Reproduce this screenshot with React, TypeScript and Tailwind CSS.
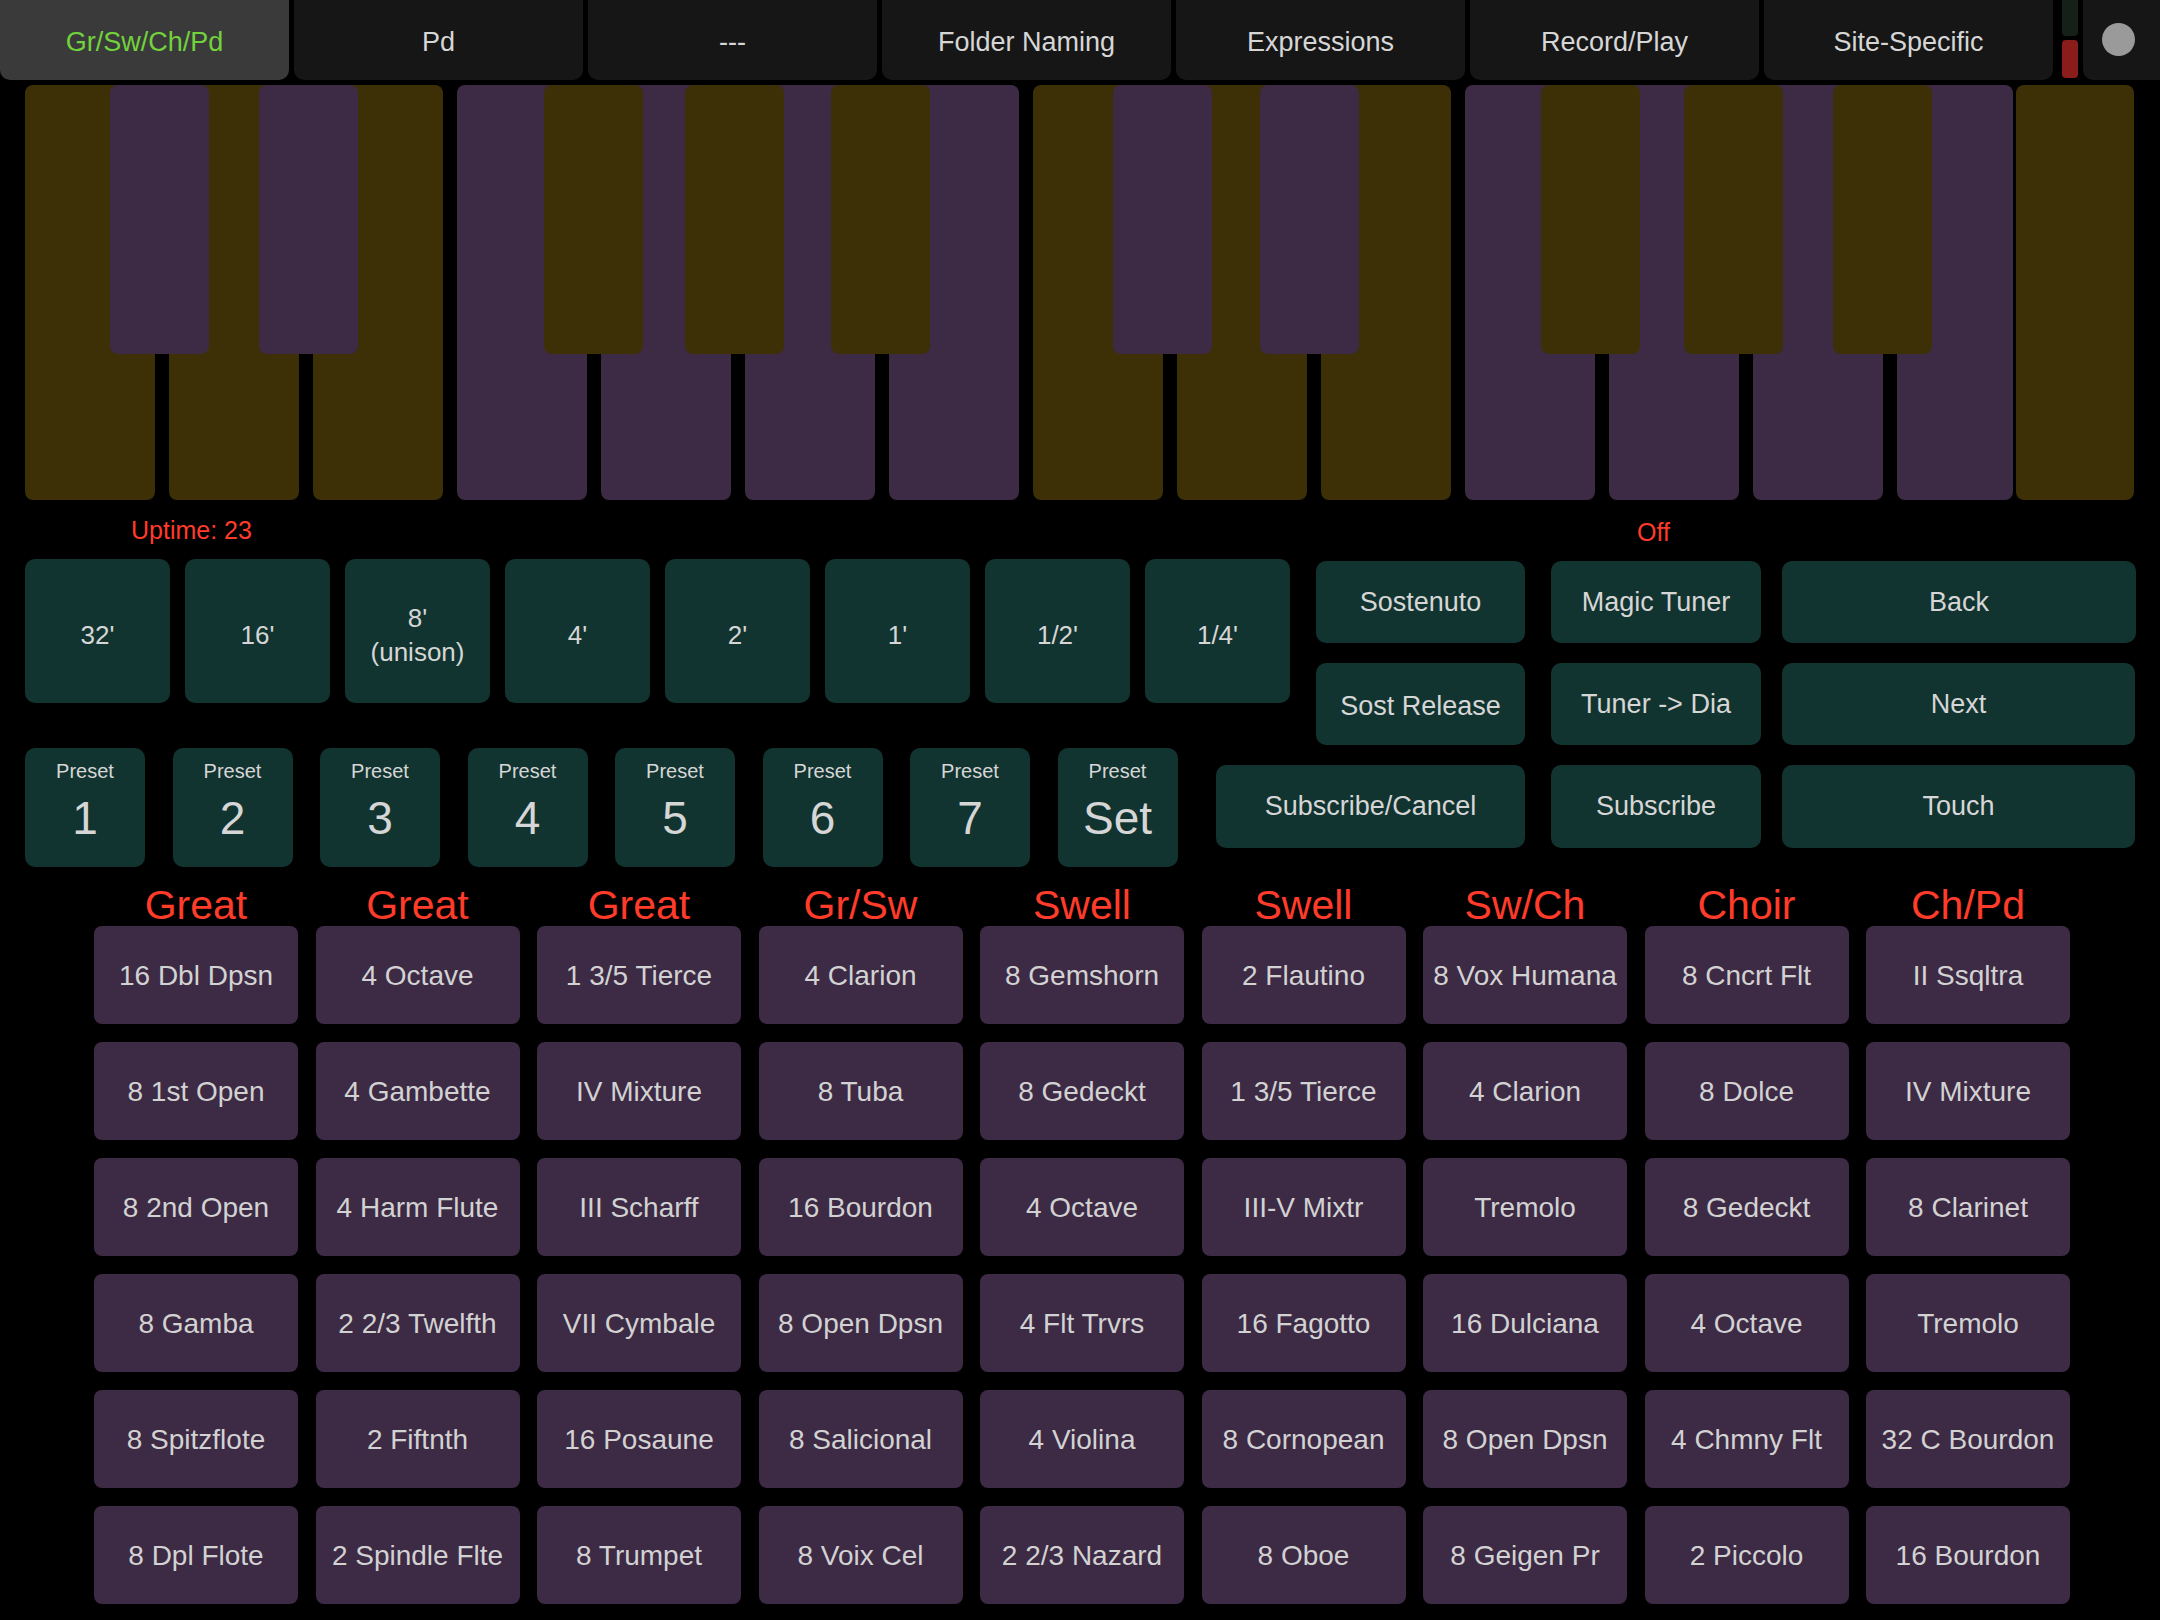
import React from "react";

const tabs = ["Gr/Sw/Ch/Pd", "Pd", "---", "Folder Naming", "Expressions", "Record/Play", "Site-Specific"];
const BROWN = "bg-[#3d2f06]";
const PURPLE = "bg-[#3d2a45]";
const whites = ["b", "b", "b", "p", "p", "p", "p", "b", "b", "b", "p", "p", "p", "p", "b"];
const blacks: [number, string][] = [
  [110, "p"], [259, "p"], [544, "b"], [685, "b"], [831, "b"], [1113, "p"], [1260, "p"], [1541, "b"], [1684, "b"], [1833, "b"],
];
const foot = ["32'", "16'", "8'\n(unison)", "4'", "2'", "1'", "1/2'", "1/4'"];
const presets = ["1", "2", "3", "4", "5", "6", "7", "Set"];
const heads = ["Great", "Great", "Great", "Gr/Sw", "Swell", "Swell", "Sw/Ch", "Choir", "Ch/Pd"];
const cols = [
  ["16 Dbl Dpsn", "8 1st Open", "8 2nd Open", "8 Gamba", "8 Spitzflote", "8 Dpl Flote"],
  ["4 Octave", "4 Gambette", "4 Harm Flute", "2 2/3 Twelfth", "2 Fiftnth", "2 Spindle Flte"],
  ["1 3/5 Tierce", "IV Mixture", "III Scharff", "VII Cymbale", "16 Posaune", "8 Trumpet"],
  ["4 Clarion", "8 Tuba", "16 Bourdon", "8 Open Dpsn", "8 Salicional", "8 Voix Cel"],
  ["8 Gemshorn", "8 Gedeckt", "4 Octave", "4 Flt Trvrs", "4 Violina", "2 2/3 Nazard"],
  ["2 Flautino", "1 3/5 Tierce", "III-V Mixtr", "16 Fagotto", "8 Cornopean", "8 Oboe"],
  ["8 Vox Humana", "4 Clarion", "Tremolo", "16 Dulciana", "8 Open Dpsn", "8 Geigen Pr"],
  ["8 Cncrt Flt", "8 Dolce", "8 Gedeckt", "4 Octave", "4 Chmny Flt", "2 Piccolo"],
  ["II Ssqltra", "IV Mixture", "8 Clarinet", "Tremolo", "32 C Bourdon", "16 Bourdon"],
];

const teal = "bg-[#123430] rounded-[10px] flex items-center justify-center text-[#d6d6d6]";

export default function App() {
  return (
    <div className="w-[2160px] h-[1620px] bg-black overflow-hidden text-[#d6d6d6]" style={{ fontFamily: '"Liberation Sans", Arial, sans-serif' }}>
      {/* tabs */}
      <div className="flex h-[80px]">
        {tabs.map((t, i) => (
          <div key={t} className={`w-[289px] mr-[5px] h-[80px] rounded-b-[10px] flex items-center justify-center pt-[4px] text-[27px] ${i === 0 ? "bg-[#3a3a3a] text-[#72d23c]" : "bg-[#161616] text-[#d6d6d6]"}`}>{t}</div>
        ))}
        <div className="w-[16px] ml-[4px] flex flex-col gap-[4px] h-[80px]">
          <div className="h-[36px] bg-[#152019] rounded-b-[4px]"></div>
          <div className="h-[38px] bg-[#8a1c1a] rounded-[4px]"></div>
        </div>
        <div className="flex-1 ml-[5px] h-[80px] bg-[#161616] rounded-bl-[10px] flex items-center justify-center">
          <div className="w-[33px] h-[33px] rounded-full bg-[#9a9a9a] mr-[6px] mt-[-2px]"></div>
        </div>
      </div>
      {/* keyboard */}
      <div className="relative ml-[25px] mt-[5px] h-[415px] flex gap-[14px]">
        {whites.map((c, i) => (
          <div key={i} className={`h-[415px] rounded-[8px] ${c === "b" ? BROWN : PURPLE} ${i === 14 ? "w-[118px] ml-[-11px]" : i === 13 ? "w-[116px]" : "w-[130px]"}`}></div>
        ))}
        {blacks.map(([x, c], i) => (
          <div key={i} className={`absolute top-0 w-[99px] h-[269px] rounded-[8px] ${c === "b" ? BROWN : PURPLE}`} style={{ left: x - 25 }}></div>
        ))}
      </div>
      {/* status */}
      <div className="relative h-[56px] text-[25px] text-[#ff3b2a]">
        <span className="absolute left-[131px] top-[12px]">Uptime: 23</span>
        <span className="absolute left-[1637px] top-[14px]">Off</span>
      </div>
      {/* controls */}
      <div className="flex h-[312px]">
        <div className="w-[1291px] pl-[25px] flex flex-col">
          <div className="flex gap-[15px] h-[144px] mt-[3px]">
            {foot.map((f) => (
              <div key={f} className={`${teal} w-[145px] h-[144px] text-[26px] text-center whitespace-pre-line leading-[34px] pt-[8px]`}>{f}</div>
            ))}
          </div>
          <div className="flex gap-[27.5px] mt-[45px]">
            {presets.map((p) => (
              <div key={p} className={`${teal} w-[120px] h-[119px] flex-col justify-start`}>
                <div className="text-[20px] mt-[8px]">Preset</div>
                <div className="text-[46px] leading-[52px] mt-[6px]">{p}</div>
              </div>
            ))}
          </div>
        </div>
        <div className="ml-[25px] flex flex-col gap-[20px] mt-[5px] text-[27px]">
          <div className="flex gap-[26px]">
            <div className={`${teal} w-[209px] h-[82px]`}>Sostenuto</div>
            <div className={`${teal} w-[210px] h-[82px]`}>Magic Tuner</div>
            <div className={`${teal} w-[354px] h-[82px] ml-[-5px]`}>Back</div>
          </div>
          <div className="flex gap-[26px]">
            <div className={`${teal} w-[209px] h-[82px] pt-[4px]`}>Sost Release</div>
            <div className={`${teal} w-[210px] h-[82px]`}>Tuner -&gt; Dia</div>
            <div className={`${teal} w-[353px] h-[82px] ml-[-5px]`}>Next</div>
          </div>
          <div className="flex gap-[26px] ml-[-100px]">
            <div className={`${teal} w-[309px] h-[83px]`}>Subscribe/Cancel</div>
            <div className={`${teal} w-[210px] h-[83px]`}>Subscribe</div>
            <div className={`${teal} w-[353px] h-[83px] ml-[-5px]`}>Touch</div>
          </div>
        </div>
      </div>
      {/* stops */}
      <div className="ml-[94px] flex gap-[17.5px]">
        {cols.map((col, ci) => (
          <div key={ci} className="w-[204px] flex flex-col">
            <div className="h-[58px] text-[41px] leading-[58px] pt-[8px] text-[#ff3b2a] text-center">{heads[ci]}</div>
            <div className="flex flex-col gap-[18px]">
              {col.map((s) => (
                <div key={s} className={`${PURPLE} h-[98px] rounded-[8px] flex items-center justify-center text-[28px] text-[#d2d2d2] whitespace-nowrap pt-[2px]`}>{s}</div>
              ))}
            </div>
          </div>
        ))}
      </div>
    </div>
  );
}
